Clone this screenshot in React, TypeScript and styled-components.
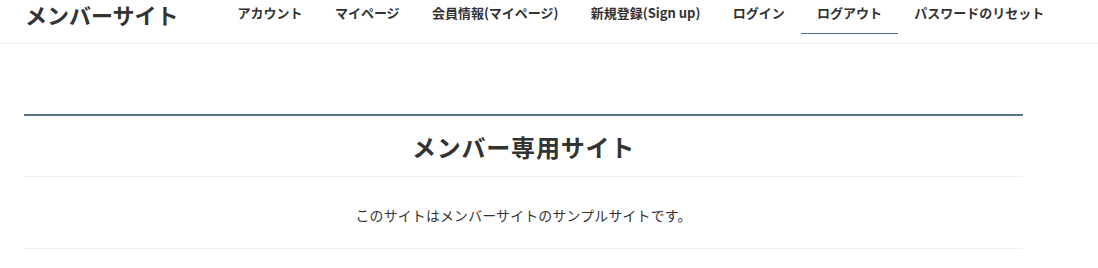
import styled, { createGlobalStyle } from "styled-components";

const Global = createGlobalStyle`
  html, body { margin: 0; padding: 0; background: #fff; }
  body {
    font-family: "Noto Sans CJK JP", "Noto Sans", sans-serif;
    color: #333;
  }
  * { box-sizing: border-box; }
`;

const Header = styled.header`
  height: 44px;
  border-bottom: 1px solid #f2f2f2;
  display: flex;
  align-items: flex-start;
  padding-left: 25px;
`;

const Logo = styled.div`
  font-size: 22px;
  font-weight: 700;
  line-height: 28px;
  color: #333;
`;

const Nav = styled.nav`
  display: flex;
  margin-left: 43px;
`;

const NavItem = styled.a<{ $active?: boolean }>`
  display: block;
  padding: 4px 16px 0;
  margin-right: 0.3px;
  height: 34px;
  font-size: 13px;
  font-weight: 700;
  line-height: 17px;
  color: #333;
  text-decoration: none;
  border-bottom: 1px solid ${({ $active }) => ($active ? "#4a6d80" : "transparent")};
`;

const Main = styled.main`
  width: 999px;
  margin: 70px 0 0 24px;
  border-top: 2px solid #5a7282;
`;

const TitleRow = styled.div`
  height: 61px;
  border-bottom: 1px solid #efefef;
  display: flex;
  align-items: center;
  justify-content: center;
`;

const Title = styled.h1`
  margin: 0;
  font-size: 24px;
  font-weight: 700;
  letter-spacing: 0.8px;
  color: #333;
`;

const BodyRow = styled.div`
  height: 72px;
  border-bottom: 1px solid #efefef;
  display: flex;
  align-items: center;
  justify-content: center;
`;

const Lead = styled.p`
  margin: 4px 0 0;
  font-size: 13.9px;
  letter-spacing: 0.2px;
  color: #333;
`;

const items = [
  "アカウント",
  "マイページ",
  "会員情報(マイページ)",
  "新規登録(Sign up)",
  "ログイン",
  "ログアウト",
  "パスワードのリセット",
];

export default function App() {
  return (
    <>
      <Global />
      <Header>
        <Logo>メンバーサイト</Logo>
        <Nav>
          {items.map((t) => (
            <NavItem key={t} href="#" $active={t === "ログアウト"}>
              {t}
            </NavItem>
          ))}
        </Nav>
      </Header>
      <Main>
        <TitleRow>
          <Title>メンバー専用サイト</Title>
        </TitleRow>
        <BodyRow>
          <Lead>このサイトはメンバーサイトのサンプルサイトです。</Lead>
        </BodyRow>
      </Main>
    </>
  );
}
